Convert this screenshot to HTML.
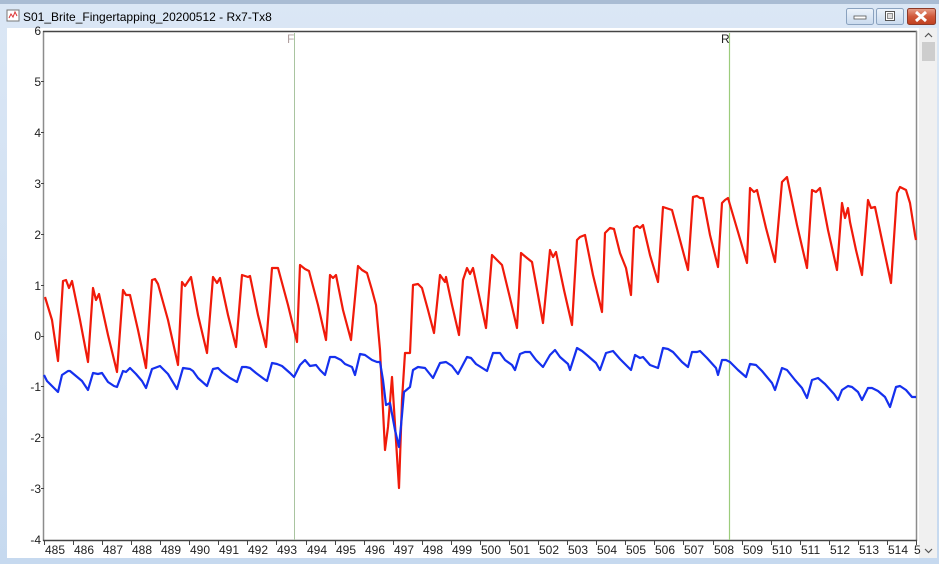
<!DOCTYPE html>
<html><head><meta charset="utf-8"><style>
html,body{margin:0;padding:0;width:939px;height:564px;overflow:hidden;background:#c9dcf1;}
svg{display:block;font-family:"Liberation Sans",sans-serif;}
</style></head><body>
<svg width="939" height="564" viewBox="0 0 939 564" xmlns="http://www.w3.org/2000/svg">
<defs>
<linearGradient id="tb" x1="0" y1="0" x2="0" y2="1"><stop offset="0" stop-color="#dbe7f5"/><stop offset="1" stop-color="#c6d9ef"/></linearGradient>
<linearGradient id="cl" x1="0" y1="0" x2="0" y2="1"><stop offset="0" stop-color="#e8a08a"/><stop offset="0.5" stop-color="#d0583a"/><stop offset="1" stop-color="#c0401f"/></linearGradient>
<linearGradient id="bt" x1="0" y1="0" x2="0" y2="1"><stop offset="0" stop-color="#eef4fb"/><stop offset="1" stop-color="#c9daee"/></linearGradient>
</defs>
<rect x="0" y="0" width="939" height="564" fill="url(#tb)"/>
<rect x="0" y="0" width="939" height="4" fill="#a9bcd3"/>
<!-- title -->
<rect x="7" y="10" width="12" height="11" fill="#fff" stroke="#777" stroke-width="1"/>
<polyline points="9,18 11,14 13,17 15,12 17,16" fill="none" stroke="#d33" stroke-width="1"/>
<text x="23" y="21" font-size="12" fill="#000">S01_Brite_Fingertapping_20200512 - Rx7-Tx8</text>
<!-- buttons -->
<rect x="846.5" y="8.5" width="27" height="16" rx="2" fill="url(#bt)" stroke="#8aa2bf"/>
<rect x="854" y="16" width="12" height="3" fill="#fff" stroke="#555" stroke-width="0.8"/>
<rect x="876.5" y="8.5" width="27" height="16" rx="2" fill="url(#bt)" stroke="#8aa2bf"/>
<rect x="885.5" y="11.5" width="9" height="9" fill="#fff" stroke="#555"/>
<rect x="887.5" y="13.5" width="5" height="5" fill="#ddd" stroke="#666" stroke-width="0.7"/>
<rect x="907.5" y="8.5" width="28" height="16" rx="2" fill="url(#cl)" stroke="#8c3a28"/>
<path d="M916,12 L926,21 M926,12 L916,21" stroke="#fff" stroke-width="3"/>
<!-- client -->
<rect x="7" y="28" width="912" height="530" fill="#fff"/>
<rect x="919" y="28" width="18" height="530" fill="#f0f0f0"/>
<rect x="922" y="42" width="13" height="19" fill="#cdcdcd"/>
<path d="M925,37 L928.5,33.5 L932,37" fill="none" stroke="#555" stroke-width="1.2"/>
<path d="M925,549 L928.5,552.5 L932,549" fill="none" stroke="#555" stroke-width="1.2"/>
<!-- plot frame -->
<line x1="43.5" y1="31" x2="43.5" y2="541" stroke="#8c8c8c" stroke-width="1.5"/>
<line x1="43" y1="31.5" x2="917" y2="31.5" stroke="#444" stroke-width="1.5"/>
<line x1="916.5" y1="31" x2="916.5" y2="541" stroke="#8c8c8c" stroke-width="1.5"/>
<line x1="43" y1="540.5" x2="917" y2="540.5" stroke="#444" stroke-width="1.5"/>
<!-- y ticks -->
<g font-size="12" fill="#222" text-anchor="end">
<text x="41" y="35">6</text><text x="41" y="86">5</text><text x="41" y="137">4</text><text x="41" y="188">3</text><text x="41" y="239">2</text><text x="41" y="290">1</text><text x="41" y="340">0</text><text x="41" y="391">-1</text><text x="41" y="442">-2</text><text x="41" y="493">-3</text><text x="41" y="544">-4</text>
</g>
<g stroke="#444" stroke-width="1">
<path d="M41,81.5h3M41,132.5h3M41,183.5h3M41,234.5h3M41,285.5h3M41,336.5h3M41,386.5h3M41,437.5h3M41,488.5h3"/>
<path d="M44.5,541v4M73.5,541v4M102.5,541v4M131.5,541v4M160.5,541v4M189.5,541v4M218.5,541v4M247.5,541v4M276.5,541v4M306.5,541v4M335.5,541v4M364.5,541v4M393.5,541v4M422.5,541v4M451.5,541v4M480.5,541v4M509.5,541v4M538.5,541v4M567.5,541v4M596.5,541v4M625.5,541v4M654.5,541v4M683.5,541v4M713.5,541v4M742.5,541v4M771.5,541v4M800.5,541v4M829.5,541v4M858.5,541v4M887.5,541v4M916.5,541v4"/>
</g>
<g font-size="12" fill="#222">
<text x="45" y="554">485</text><text x="74" y="554">486</text><text x="103" y="554">487</text><text x="132" y="554">488</text><text x="161" y="554">489</text><text x="190" y="554">490</text><text x="219" y="554">491</text><text x="248" y="554">492</text><text x="277" y="554">493</text><text x="307" y="554">494</text><text x="336" y="554">495</text><text x="365" y="554">496</text><text x="394" y="554">497</text><text x="423" y="554">498</text><text x="452" y="554">499</text><text x="481" y="554">500</text><text x="510" y="554">501</text><text x="539" y="554">502</text><text x="568" y="554">503</text><text x="597" y="554">504</text><text x="626" y="554">505</text><text x="655" y="554">506</text><text x="684" y="554">507</text><text x="714" y="554">508</text><text x="743" y="554">509</text><text x="772" y="554">510</text><text x="801" y="554">511</text><text x="830" y="554">512</text><text x="859" y="554">513</text><text x="888" y="554">514</text><text x="914" y="554">5</text>
</g>
<!-- markers -->
<line x1="294.5" y1="33" x2="294.5" y2="540" stroke="#a9c4a0" stroke-width="1"/>
<text x="287" y="43" font-size="12" fill="#b0a0a0">F</text>
<line x1="729.5" y1="33" x2="729.5" y2="540" stroke="#9ccc7c" stroke-width="1.2"/>
<text x="721" y="43" font-size="12" fill="#222">R</text>
<!-- red -->
<polyline fill="none" stroke="#f01a0a" stroke-width="2.2" stroke-linejoin="round" points="
45,297 52,320 58,361 63,281 66,280 69,288 72,281 80,320 88,362 93,288 96,300 99,294 108,335 117,372 123,290 126,295 130,295 138,330 146,368 152,280 155,279 158,284 168,320 178,365 182,282 185,286 191,277 198,315 207,353 213,277 217,283 220,278 228,315 236,347 242,275 248,277 250,276 258,315 266,347 272,268 278,268 288,305 297,342 300,265 305,269 309,271 318,305 326,340 330,275 333,278 336,275 343,310 351,340 358,266 362,270 367,273 372,290 376,305 380,350 385,450 388,427 392,377 399,488 402,400 405,353 410,353 413,285 418,284 422,288 428,310 434,333 440,275 445,282 446,277 452,305 459,335 463,280 467,268 470,274 473,268 480,300 486,328 492,255 497,260 502,265 510,298 517,328 521,253 527,258 532,262 538,295 543,323 550,250 553,257 556,252 564,290 572,325 577,240 580,237 585,235 593,275 602,312 605,233 610,228 614,229 620,253 626,268 631,295 634,228 637,226 640,228 643,225 650,255 658,282 663,207 672,210 680,240 688,270 693,197 697,196 700,198 703,198 710,235 718,267 722,203 725,200 728,198 738,232 747,263 750,188 754,192 757,190 766,228 775,262 782,182 787,177 797,225 807,268 812,190 816,192 820,188 828,230 837,270 842,203 845,218 848,208 850,222 856,250 862,275 868,200 871,208 875,207 883,245 891,283 897,193 900,187 906,190 910,203 915,235 916,240"/>
<!-- blue -->
<polyline fill="none" stroke="#1530ee" stroke-width="2.2" stroke-linejoin="round" points="
44,375 47,381 52,386 58,392 62,375 68,371 70,371 76,376 82,381 88,390 93,373 98,374 102,373 108,382 114,386 117,387 123,371 126,372 130,368 136,374 142,381 146,388 152,369 160,366 168,374 177,389 183,368 190,369 193,371 198,378 207,386 213,369 218,368 222,372 230,378 237,382 242,367 246,367 250,368 256,373 264,379 267,381 272,363 277,364 282,366 290,373 294,377 300,365 305,360 310,366 316,365 320,370 325,375 330,357 335,357 341,360 345,364 352,367 355,375 360,354 365,355 372,360 377,362 380,362 383,380 386,405 390,403 395,430 399,447 402,415 404,392 410,387 413,370 418,367 425,368 433,378 440,363 446,362 452,366 458,374 467,357 471,358 476,364 487,371 493,353 500,353 505,360 512,365 515,370 520,354 525,352 530,352 536,360 543,367 550,355 555,350 560,357 568,364 570,370 577,348 582,351 588,356 596,363 600,370 606,353 613,351 620,359 626,365 631,370 635,355 640,358 643,357 650,365 658,368 663,348 668,349 673,352 682,362 688,367 692,352 697,352 700,351 707,358 716,368 718,375 722,360 726,360 730,362 738,370 746,377 750,364 756,365 762,371 772,383 775,390 782,368 787,370 795,380 802,388 807,398 812,380 818,378 825,384 834,394 838,400 842,390 848,386 852,387 858,392 862,400 868,388 872,388 878,391 885,397 890,407 896,387 900,386 906,390 912,397 916,397"/>
</svg>
</body></html>
